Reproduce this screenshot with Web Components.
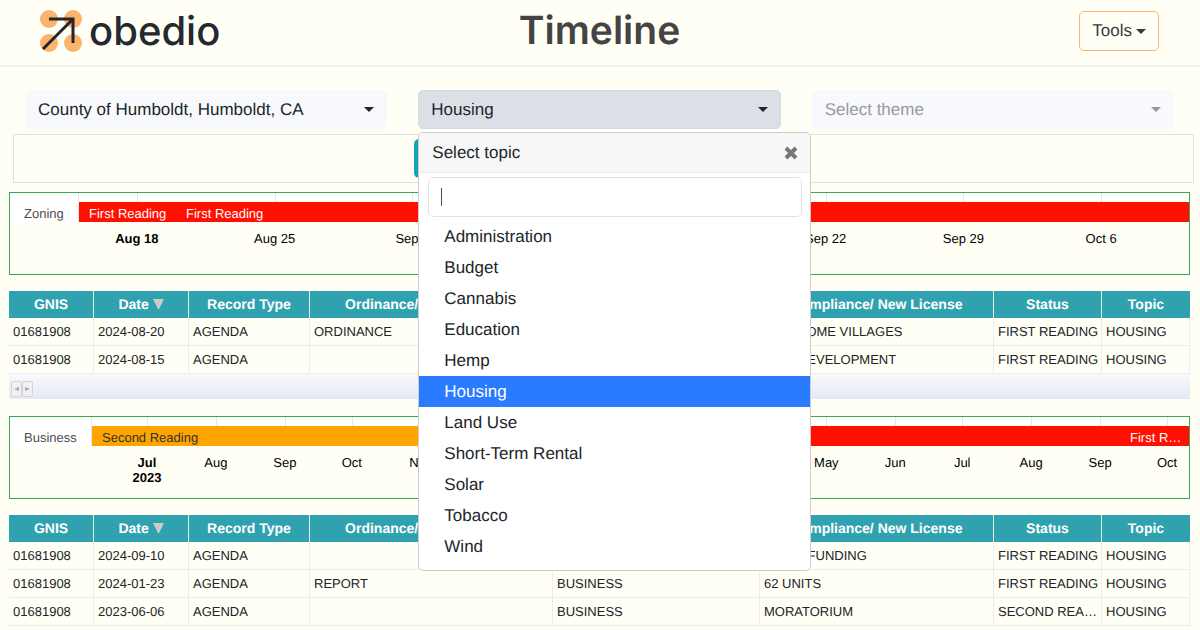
<!DOCTYPE html>
<html lang="en">
<head>
<meta charset="utf-8">
<meta name="viewport" content="width=device-width, initial-scale=1">
<title>Timeline</title>
<style>
  :root {
    --page: #fffff5;
    --ink: #212529;
    --teal: #30a2af;
    --green: #34a853;
    --line: #ececf0;
    --red: #ff1000;
    --orange: #ffa500;
  }
  body {
    margin: 0;
    background: var(--page);
    color: var(--ink);
    font: 17px/24px "Liberation Sans", Arial, sans-serif;
    text-rendering: geometricPrecision;
  }
</style>
</head>
<body>
<timeline-page></timeline-page>

<script>
// Small helper: attach an open root and fill it.
function render(host, html) {
  host.attachShadow({ mode: "open" }).innerHTML =
    `<style>
      *, *::before, *::after { box-sizing: border-box; }
      button, input, select { text-rendering: inherit; }
    </style>` + html;
}

// ---- data ----
const TOPICS = [
  "Administration", "Budget", "Cannabis", "Education", "Hemp", "Housing",
  "Land Use", "Short-Term Rental", "Solar", "Tobacco", "Wind",
];

// col widths are proportions, the table stretches them to the window
const COLUMNS = [
  ["GNIS", 85], ["Date", 95], ["Record Type", 121], ["Ordinance/Resolution No.", 243],
  ["Category", 207], ["Compliance/ New License", 234], ["Status", 108], ["Topic", 88],
];

const TABLES = {
  zoning: [
    ["01681908", "2024-08-20", "AGENDA", "ORDINANCE", "ZONING", "TINY HOME VILLAGES", "FIRST READING", "HOUSING"],
    ["01681908", "2024-08-15", "AGENDA", "", "ZONING", "NEW DEVELOPMENT", "FIRST READING", "HOUSING"],
  ],
  business: [
    ["01681908", "2024-09-10", "AGENDA", "", "BUSINESS", "STATE FUNDING", "FIRST READING", "HOUSING"],
    ["01681908", "2024-01-23", "AGENDA", "REPORT", "BUSINESS", "62 UNITS", "FIRST READING", "HOUSING"],
    ["01681908", "2023-06-06", "AGENDA", "", "BUSINESS", "MORATORIUM", "SECOND READING", "HOUSING"],
  ],
};

// ticks: [label, space after it]; bars: [label, colour class, length]
const CHARTS = {
  zoning: {
    label: "Zoning",
    labelWidth: 69,
    lead: 58,
    ticks: [
      ["Aug 18", 138], ["Aug 25", 138], ["Sep 1", 138], ["Sep 8", 138],
      ["Sep 15", 138], ["Sep 22", 138], ["Sep 29", 138], ["Oct 6", 88],
    ],
    bars: [["First Reading", "red", 97], ["First Reading", "red", 1013]],
  },
  business: {
    label: "Business",
    labelWidth: 82,
    lead: 55,
    ticks: [
      ["Jul<br>2023", 69], ["Aug", 69], ["Sep", 67], ["Oct", 69], ["Nov", 67], ["Dec", 69],
      ["Jan", 69], ["Feb", 65], ["Mar", 69], ["Apr", 67], ["May", 69], ["Jun", 67],
      ["Jul", 69], ["Aug", 69], ["Sep", 67], ["Oct", 22],
    ],
    bars: [["Second Reading", "orange", 514], ["", "red", 514], ["First Reading", "red", 69]],
  },
};

// ---- header ----
class SiteLogo extends HTMLElement {
  connectedCallback() {
    render(this, `
      <style>
        :host { display: block; }
        a { display: flex; align-items: center; gap: 6px; color: #26282f; text-decoration: none; }
        svg { width: 43px; height: 42px; }
        span { font: 500 40px/48px Inter, "Liberation Sans", sans-serif; }
      </style>
      <a href="#">
        <svg viewBox="0 0 43 42" aria-hidden="true">
          <g fill="#fbb36d">
            <circle cx="9" cy="9" r="9"/><circle cx="33" cy="9" r="9"/>
            <circle cx="9" cy="33" r="9"/><circle cx="33" cy="33" r="9"/>
          </g>
          <path d="M9 9H33V33M33 9L3 39" fill="none" stroke="#23242c" stroke-width="3"/>
        </svg>
        <span>obedio</span>
      </a>
    `);
  }
}

class SiteHeader extends HTMLElement {
  connectedCallback() {
    render(this, `
      <style>
        :host { display: block; border-bottom: 2px solid #f1f1ec; }
        header {
          display: grid; grid-template-columns: 1fr auto 1fr; align-items: center;
          padding: 7px 41px 10px 40px;
        }
        h1 { margin: 0; font: 600 39px/46px Inter, "Liberation Sans", sans-serif; color: #444; }
        button {
          justify-self: end; display: flex; align-items: center; gap: 4px;
          height: 40px; padding: 0 12px; border: 1px solid #fbb36d; border-radius: 5px;
          background: transparent; color: #343a40; font: inherit;
        }
        button::after { content: ""; border: 5px solid transparent; border-top-color: currentColor; border-bottom: 0; }
      </style>
      <header>
        <site-logo></site-logo>
        <h1>Timeline</h1>
        <button type="button">Tools</button>
      </header>
    `);
  }
}

// ---- filters ----
class FilterSelect extends HTMLElement {
  connectedCallback() {
    const label = this.getAttribute("label");
    const value = this.getAttribute("value") || label;
    render(this, `
      <style>
        :host { display: block; position: relative; }
        .box { display: grid; align-items: center; }
        select {
          appearance: none; grid-area: 1 / 1; width: 100%; height: 39px; padding: 0 40px 0 12px;
          border: 1px solid #f8f9fc; border-radius: 5px; background: #f8f9fc;
          color: inherit; font: inherit;
        }
        .box::after {
          content: ""; grid-area: 1 / 1; justify-self: end; margin-right: 13px;
          border: 5px solid transparent; border-top-color: currentColor; border-bottom: 0;
          pointer-events: none;
        }
        :host([empty]) .box { color: #999; }
        :host([open]) select { background: #dae0e5; border-color: #d3d9df; }
      </style>
      <div class="box">
        <select aria-label="${label}"><option>${value}</option></select>
      </div>
      <slot></slot>
    `);
  }
}

class TopicMenu extends HTMLElement {
  connectedCallback() {
    const selected = this.getAttribute("selected");
    render(this, `
      <style>
        :host {
          position: absolute; z-index: 5; top: 100%; left: 0; margin-top: 3px;
          width: calc(100% + 30px); padding-bottom: 8px;
          border: 1px solid #ccc; border-radius: 5px; background: #fff;
          overflow: hidden;
        }
        .title {
          display: flex; align-items: center; justify-content: space-between;
          height: 40px; padding: 0 12px 0 13px;
          background: #f7f7f7; border-bottom: 1px solid #ebebeb;
        }
        .title button { display: flex; padding: 0; border: 0; background: none; }
        .search { padding: 4px 8px 4px 9px; }
        input {
          display: block; width: 100%; height: 40px; padding: 0 13px;
          border: 1px solid #dfe3e8; border-radius: 5px; font: inherit; color: inherit;
          /* text cursor */
          background: linear-gradient(#495057, #495057) 12px center / 1px 18px no-repeat #fff;
        }
        ul { list-style: none; margin: 0; padding: 0; }
        li button {
          display: block; width: 100%; height: 31px; padding: 0 25px;
          border: 0; background: none; color: inherit; font: inherit; text-align: left;
        }
        li button[aria-pressed="true"] { background: #2a7bff; color: #fff; }
      </style>
      <div class="title">
        <span>Select topic</span>
        <button type="button" aria-label="Close">
          <svg width="14" height="14" viewBox="0 0 14 14"><path d="M2 2L12 12M12 2L2 12" stroke="#777" stroke-width="4"/></svg>
        </button>
      </div>
      <div class="search"><input type="text" aria-label="Search topics"></div>
      <ul>${TOPICS.map((t) => `<li><button type="button" aria-pressed="${t === selected}">${t}</button></li>`).join("")}</ul>
    `);
  }
}

class ActionBar extends HTMLElement {
  connectedCallback() {
    render(this, `
      <style>
        :host { display: flex; justify-content: center; padding: 4px; border: 1px solid #dee2e6; }
        button { width: calc(33% - 8px); height: 39px; border: 0; border-radius: 5px; background: #17a2b8; }
      </style>
      <button type="button" aria-label="Search"></button>
    `);
  }
}

// ---- timeline strip ----
class TimelineChart extends HTMLElement {
  connectedCallback() {
    const c = CHARTS[this.getAttribute("data")];
    const tracks = (sizes) => sizes.map((n) => `minmax(0, ${n}fr)`).join(" ");
    render(this, `
      <style>
        :host { display: block; height: 83px; border: 1px solid var(--green); font-size: 13px; line-height: 15px; }
        .chart { display: grid; grid-template-columns: ${c.labelWidth}px minmax(0, 1fr); }
        .label {
          padding: 13px 0 0 14px; background: #fff; color: #4d4d4d;
          border-right: 1px solid #e6e6e6;
        }
        .ticks, .axis { display: grid; grid-template-columns: ${tracks([c.lead, ...c.ticks.map((t) => t[1])])}; }
        .ticks { height: 9px; background: #fff; }
        .ticks i + i { border-left: 1px solid #e6e6e6; }
        .bars { display: grid; height: 20px; grid-template-columns: ${tracks(c.bars.map((b) => b[2]))}; }
        .bar {
          padding: 4px 4px 0 10px; color: #fff;
          white-space: nowrap; overflow: hidden; text-overflow: ellipsis;
        }
        .red { background: var(--red); }
        .orange { background: var(--orange); color: #333; }
        .axis { grid-column: 2; padding-top: 9px; color: #000; }
        .axis span { justify-self: start; transform: translateX(-50%); text-align: center; white-space: nowrap; }
        .axis span:nth-child(2) { font-weight: 700; }
      </style>
      <div class="chart">
        <div class="label">${c.label}</div>
        <div class="plot">
          <div class="ticks"><i></i>${c.ticks.map(() => "<i></i>").join("")}</div>
          <div class="bars">${c.bars.map(([t, cls]) => `<div class="bar ${cls}">${t}</div>`).join("")}</div>
        </div>
        <div class="axis"><i></i>${c.ticks.map(([t]) => `<span>${t}</span>`).join("")}</div>
      </div>
    `);
  }
}

// ---- records ----
class RecordTable extends HTMLElement {
  connectedCallback() {
    const rows = TABLES[this.getAttribute("data")];
    render(this, `
      <style>
        :host { display: block; font-size: 13px; line-height: 16px; }
        table { width: 100%; table-layout: fixed; border-collapse: separate; border-spacing: 0; }
        th {
          height: 27px; padding: 0 0 2px; background: var(--teal); color: #fff; font-size: 14px;
          border-right: 1px solid #e4f1f2; white-space: nowrap;
        }
        th:last-child { border-right: 0; }
        th svg { width: 11px; height: 10px; }
        td {
          height: 28px; padding: 0 1px 0 4px; white-space: nowrap; overflow: hidden; text-overflow: ellipsis;
          border-right: 1px solid var(--line); border-bottom: 1px solid var(--line);
        }
        .pager {
          display: flex; height: 25px; padding: 7px 2px 2px;
          background: linear-gradient(#fafafd, #e3e8f4);
        }
        .pager button {
          display: flex; align-items: center; justify-content: center; width: 11px; padding: 0;
          border: 1px solid #d5d5d5; border-radius: 2px; background: #f1f1f3;
        }
      </style>
      <table>
        <colgroup>${COLUMNS.map((c) => `<col style="width:${c[1]}px">`).join("")}</colgroup>
        <thead><tr>${COLUMNS.map(([n]) => `<th scope="col">${n}${n === "Date" ? ` <svg viewBox="0 0 11 10" aria-hidden="true"><path d="M0 0H11L6 10H5Z" fill="#ccc"/></svg>` : ""}</th>`).join("")}</tr></thead>
        <tbody>${rows.map((r) => `<tr>${r.map((v) => `<td>${v}</td>`).join("")}</tr>`).join("")}</tbody>
      </table>
      ${this.hasAttribute("paged") ? `
      <div class="pager">
        <button type="button" aria-label="Previous page"><svg width="5" height="4" viewBox="0 0 5 4"><path d="M5 0V4L0 2Z" fill="#aaa"/></svg></button>
        <button type="button" aria-label="Next page"><svg width="5" height="4" viewBox="0 0 5 4"><path d="M0 0V4L5 2Z" fill="#aaa"/></svg></button>
      </div>` : ""}
    `);
  }
}

// ---- page ----
class TimelinePage extends HTMLElement {
  connectedCallback() {
    render(this, `
      <style>
        :host { display: block; }
        .filters {
          display: grid; grid-template-columns: repeat(3, minmax(0, 1fr)); gap: 31px;
          padding: 23px 26px 5px 25px;
        }
        action-bar { margin: 0 6px 0 13px; }
        section { display: grid; gap: 16px; padding: 9px 10px 8px 9px; }
      </style>
      <site-header></site-header>
      <main>
        <div class="filters">
          <filter-select label="Select jurisdiction" value="County of Humboldt, Humboldt, CA"></filter-select>
          <filter-select label="Select topic" value="Housing" open>
            <topic-menu selected="Housing"></topic-menu>
          </filter-select>
          <filter-select label="Select theme" empty></filter-select>
        </div>
        <action-bar></action-bar>
        <section>
          <timeline-chart data="zoning"></timeline-chart>
          <record-table data="zoning" paged></record-table>
        </section>
        <section>
          <timeline-chart data="business"></timeline-chart>
          <record-table data="business"></record-table>
        </section>
      </main>
    `);
  }
}

customElements.define("site-logo", SiteLogo);
customElements.define("site-header", SiteHeader);
customElements.define("topic-menu", TopicMenu);
customElements.define("filter-select", FilterSelect);
customElements.define("action-bar", ActionBar);
customElements.define("timeline-chart", TimelineChart);
customElements.define("record-table", RecordTable);
customElements.define("timeline-page", TimelinePage);
</script>
</body>
</html>
